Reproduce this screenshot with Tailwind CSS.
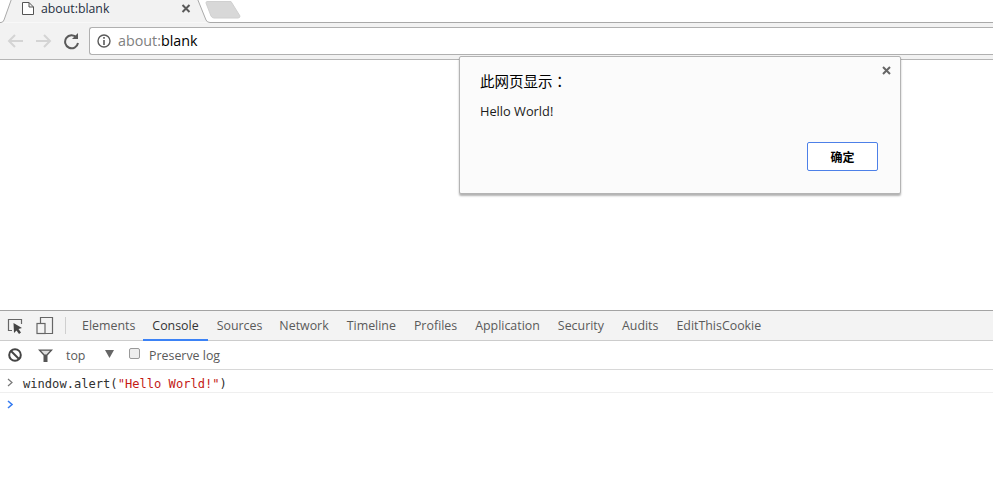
<!doctype html>
<html><head><meta charset="utf-8">
<script src="https://cdn.jsdelivr.net/npm/@tailwindcss/browser@4"></script>
</head>
<body class="bg-white overflow-hidden">
<div class="w-[993px] h-[487px] flex flex-col relative font-['Open_Sans','Noto_Sans_CJK_SC',sans-serif] overflow-hidden">
  <!-- tab strip -->
  <div class="h-[23px] relative shrink-0 bg-white">
    <svg class="absolute left-0 top-0" width="260" height="23" viewBox="0 0 260 23">
      <path d="M-1 22.5H1Q3 22.5 4 20L11.5 -1H197.5L206 20Q207 22.5 210 22.5H260" fill="#f2f2f2" stroke="#a9a9a9"/>
      <path d="M207 1.5H231L240 16Q240 18 238 18H214Q212 18 211 16L206 3Q206 1.5 207 1.5Z" fill="#d8d8d8" stroke="#d0d0d0"/>
      <path d="M22.5 2.5H29L33.5 7V14.5H22.5Z M29 2.5V7H33.5" fill="#fff" stroke="#555" stroke-width="1"/>
      <path d="M182.5 5L189.5 12M189.5 5L182.5 12" stroke="#5a5a5a" stroke-width="2"/>
    </svg>
    <div class="absolute left-[41px] top-0 text-[12.3px] leading-[17px] text-[#1f2f3f]">about:blank</div>
    <div class="absolute left-[260px] right-0 top-[22px] h-px bg-[#a9a9a9]"></div>
  </div>
  <!-- toolbar -->
  <div class="h-[37px] shrink-0 bg-[#f2f2f2] border-b border-[#b5b5b5] flex items-center">
    <svg class="ml-[7px] shrink-0" width="72" height="18" viewBox="0 0 72 18">
      <path d="M16 9H2M8 3L2 9L8 15" fill="none" stroke="#d4d4d4" stroke-width="2"/>
      <path d="M29 9H43M37 3L43 9L37 15" fill="none" stroke="#d4d4d4" stroke-width="2"/>
      <path d="M69.5 5.5A6.5 6.5 0 1 0 71 11" fill="none" stroke="#5a5a5a" stroke-width="2"/>
      <path d="M71 1V7H65Z" fill="#5a5a5a"/>
    </svg>
    <div class="ml-[10px] flex-1 h-[28px] bg-white border border-[#b0b0b0] rounded-l-[3px] border-r-0 flex items-center -mr-px">
      <svg class="ml-[7px] shrink-0" width="14" height="14" viewBox="0 0 14 14">
        <circle cx="7" cy="7" r="6" fill="none" stroke="#5a5a5a" stroke-width="1.4"/>
        <path d="M7 3V4.8M7 6V11" stroke="#5a5a5a" stroke-width="1.6"/>
      </svg>
      <span class="ml-[7px] text-[14.3px] leading-[20px] text-[#808080]">about:<span class="text-black">blank</span></span>
    </div>
  </div>
  <!-- page -->
  <div class="flex-1 relative bg-white">
    <div class="absolute left-[459px] top-[-4px] w-[442px] h-[138px] bg-[#fbfbfb] border border-[#b4b4b4] rounded-[2px] shadow-[0_2px_2px_rgba(0,0,0,0.3)] z-10">
      <div class="absolute left-[20px] top-[14px] text-[14.5px] leading-[20px] text-black">此网页显示<span class="font-['Noto_Sans_CJK_TC',sans-serif]">：</span></div>
      <svg class="absolute right-[9px] top-[9px]" width="9" height="9" viewBox="0 0 9 9"><path d="M1 1L8 8M8 1L1 8" stroke="#666" stroke-width="2"/></svg>
      <div class="absolute left-[20px] top-[45px] text-[12.8px] leading-[18px] text-[#1a1a1a]">Hello World!</div>
      <button class="absolute left-[347px] top-[85px] w-[71px] h-[29px] pt-[2px] bg-white border border-[#4d80e8] rounded-[2px] text-[12px] font-bold text-black flex items-center justify-center">确定</button>
    </div>
  </div>
  <!-- devtools -->
  <div class="h-[177px] shrink-0 bg-white flex flex-col">
    <div class="h-[31px] shrink-0 bg-[#f3f3f3] border-t border-[#a3a3a3] border-b border-b-[#cccccc] flex items-stretch text-[12.4px] text-[#5a5a5a]">
      <div class="w-[66px] shrink-0 flex items-center relative">
        <svg class="ml-[7px] shrink-0" width="48" height="18" viewBox="0 0 48 18">
          <path d="M5 13.5H1.5V2.5H14.5V7" fill="none" stroke="#666" stroke-width="1.2"/>
          <path d="M6.5 6L7 16L9.5 13.5L12 17L14 15.5L11.5 12L15 11Z" fill="#444"/>
          <path d="M33.5 6V0.5H45.5V16.5H38" fill="none" stroke="#666" stroke-width="1.2"/>
          <rect x="30" y="6.5" width="8" height="10" fill="#f3f3f3" stroke="#666" stroke-width="1.2"/>
        </svg>
        <div class="absolute left-[65px] top-[6px] w-px h-[17px] bg-[#cfcfcf]"></div>
      </div>
      <div class="flex ml-[7px] items-stretch">
        <span class="flex items-center pl-[9px] pr-[8px] pt-px">Elements</span>
        <span class="flex items-center px-[9px] pt-[3px] text-[#333] border-b-2 border-[#3b82f6] h-[30px]">Console</span>
        <span class="flex items-center pl-[9px] pr-[8px] pt-px">Sources</span>
        <span class="flex items-center px-[9px] pt-px">Network</span>
        <span class="flex items-center px-[9px] pt-px">Timeline</span>
        <span class="flex items-center px-[9px] pt-px">Profiles</span>
        <span class="flex items-center px-[9px] pt-px">Application</span>
        <span class="flex items-center px-[9px] pt-px">Security</span>
        <span class="flex items-center px-[9px] pt-px">Audits</span>
        <span class="flex items-center px-[9px] pt-px">EditThisCookie</span>
      </div>
    </div>
    <div class="h-[29px] shrink-0 bg-white border-b border-[#d8d8d8] flex items-center text-[12.4px] text-[#5a5a5a]">
      <svg class="ml-[8px] shrink-0" width="14" height="14" viewBox="0 0 14 14">
        <circle cx="7" cy="7" r="5.8" fill="none" stroke="#444" stroke-width="2"/>
        <path d="M3 3L11 11" stroke="#444" stroke-width="2"/>
      </svg>
      <svg class="ml-[16px] shrink-0" width="15" height="13" viewBox="0 0 15 13">
        <path d="M0 0.5H15L9.5 6.5V13H5.5V6.5Z" fill="#555"/>
        <path d="M3 1.8H12L8.5 5.5H6.5Z" fill="#ddd"/>
      </svg>
      <span class="ml-[13px] w-[39px] pt-[2px]">top</span>
      <svg class="shrink-0 mb-[2px]" width="9" height="8" viewBox="0 0 9 8"><path d="M0 0H9L4.5 8Z" fill="#666"/></svg>
      <span class="ml-[15px] w-[11px] h-[11px] mb-[4px] rounded-[2px] bg-[#eee] border border-[#999] shrink-0"></span>
      <span class="ml-[9px] pt-[2px]">Preserve log</span>
    </div>
    <div class="h-[23px] shrink-0 border-b border-[#efefef] flex items-center font-['DejaVu_Sans_Mono',monospace] text-[12.1px] text-[#303030]">
      <svg class="ml-[7px] mt-[3px] shrink-0" width="7" height="9" viewBox="0 0 7 9"><path d="M1 1L5 4.5L1 8" fill="none" stroke="#777" stroke-width="1.2"/></svg>
      <span class="ml-[9px] leading-[16px] pt-[5px]">window.alert(<span class="text-[#c41a16]">"Hello World!"</span>)</span>
    </div>
    <div class="h-[22px] flex items-center">
      <svg class="ml-[7px] shrink-0" width="7" height="9" viewBox="0 0 7 9"><path d="M1 1L5 4.5L1 8" fill="none" stroke="#367cf1" stroke-width="1.6"/></svg>
    </div>
  </div>
</div>
</body></html>
